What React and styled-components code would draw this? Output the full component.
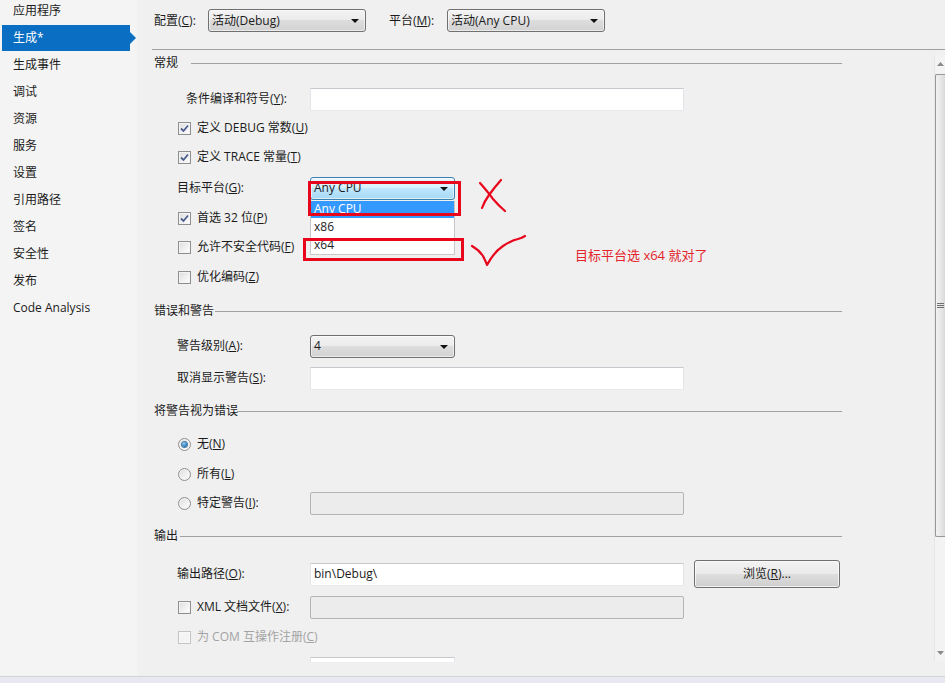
import React from "react";
import styled, { createGlobalStyle } from "styled-components";

const GlobalStyle = createGlobalStyle`
  html, body { margin: 0; padding: 0; }
  body {
    background: #f0f0f0;
    font-family: "Open Sans", "Noto Sans CJK SC", sans-serif;
    font-size: 12px;
    color: #1b1b1b;
    overflow: hidden;
  }
  u { text-decoration-thickness: 1px; text-underline-offset: 1px; }
`;

const Window = styled.div`
  position: relative;
  width: 945px;
  height: 683px;
  display: flex;
  flex-direction: column;
  overflow: hidden;
  line-height: 16px;
`;

const Workspace = styled.div`
  flex: 1;
  display: flex;
  min-height: 0;
`;

const Sidebar = styled.nav`
  width: 137px;
  flex-shrink: 0;
  background: #f4f4f4;
`;

const NavList = styled.ul`
  list-style: none;
  margin: -3px 0 0;
  padding: 0;
  display: flex;
  flex-direction: column;
`;

const NavItem = styled.li`
  position: relative;
  height: 26px;
  margin: 1px 0 0 2px;
  width: 128px;
  padding-left: 11px;
  box-sizing: border-box;
  display: flex;
  align-items: center;
  background: ${(p) => (p.$active ? "#0a6fc2" : "transparent")};
  color: ${(p) => (p.$active ? "#ffffff" : "#1b1b1b")};
  &::after {
    content: "";
    display: ${(p) => (p.$active ? "block" : "none")};
    position: absolute;
    right: -6px;
    top: 7px;
    border-left: 6px solid #0a6fc2;
    border-top: 6px solid transparent;
    border-bottom: 6px solid transparent;
  }
`;

const Main = styled.main`
  flex: 1;
  min-width: 0;
  display: flex;
  flex-direction: column;
  padding-left: 15px;
`;

const TopBar = styled.div`
  height: 41px;
  display: flex;
  align-items: center;
  padding-left: 2px;
`;

const TopLabel = styled.span`
  width: ${(p) => p.$w}px;
  margin-left: ${(p) => p.$ml || 0}px;
  flex-shrink: 0;
  white-space: nowrap;
`;

const Divider = styled.div`
  height: 1px;
  background: #a0a0a0;
  margin-top: 8px;
`;

const Body = styled.div`
  flex: 1;
  display: flex;
  min-height: 0;
  padding-bottom: 14px;
`;

const Form = styled.div`
  flex: 1;
  overflow: hidden;
  padding-left: 2px;
  display: flex;
  flex-direction: column;
`;

const SectionHeader = styled.div`
  width: 688px;
  height: 24px;
  flex-shrink: 0;
  display: flex;
  align-items: center;
  margin-top: ${(p) => p.$mt}px;
`;

const SectionTitle = styled.span`
  width: ${(p) => p.$w}px;
  flex-shrink: 0;
  white-space: nowrap;
`;

const Rule = styled.div`
  flex: 1;
  height: 1px;
  background: #a0a0a0;
`;

const Row = styled.div`
  height: 24px;
  flex-shrink: 0;
  display: flex;
  align-items: ${(p) => (p.$top ? "flex-start" : "center")};
  padding-left: 23px;
  margin-top: ${(p) => p.$mt}px;
`;

const FieldLabel = styled.span`
  width: 133px;
  flex-shrink: 0;
  box-sizing: border-box;
  padding-left: ${(p) => p.$indent || 0}px;
  white-space: nowrap;
`;

const TextBox = styled.div`
  width: ${(p) => p.$w || 374}px;
  height: 23px;
  box-sizing: border-box;
  border: 1px solid;
  border-color: ${(p) =>
    p.$disabled ? "#b4b4b4" : "#c6c9ce #e2e5ea #e6e9ee #e2e5ea"};
  background: ${(p) => (p.$disabled ? "#ececec" : "#ffffff")};
  border-radius: ${(p) => (p.$disabled ? "2px" : "1px")};
  padding-left: 3px;
  display: flex;
  align-items: center;
`;

const Select = styled.div`
  position: relative;
  width: ${(p) => p.$w || 145}px;
  height: 23px;
  flex-shrink: 0;
  box-sizing: border-box;
  border: 1px solid ${(p) => (p.$hot ? "#3c7fb1" : "#707070")};
  border-radius: 3px;
  background: ${(p) =>
    p.$hot
      ? "linear-gradient(#eaf6fd 0%, #d9f0fc 45%, #bee6fd 50%, #a7d9f5 100%)"
      : "linear-gradient(#f3f3f3 0%, #ececec 45%, #dddddd 50%, #d2d2d2 100%)"};
  padding: 0 14px 0 3px;
  display: flex;
  align-items: center;
  box-shadow: inset 0 0 0 1px rgba(255, 255, 255, 0.55);
  &::after {
    content: "";
    position: absolute;
    right: 6px;
    top: 9px;
    border-top: 4px solid #111;
    border-left: 4px solid transparent;
    border-right: 4px solid transparent;
  }
`;

const DropHost = styled.div`
  position: relative;
`;

const DropList = styled.ul`
  position: absolute;
  z-index: 5;
  left: 0;
  top: 24px;
  width: 145px;
  box-sizing: border-box;
  margin: 0;
  padding: 0;
  list-style: none;
  background: #fff;
  border: 1px solid #c8c8c8;
  border-top: none;
`;

const DropItem = styled.li`
  height: 17px;
  padding-left: 3px;
  display: flex;
  align-items: center;
  background: ${(p) => (p.$active ? "#3399ff" : "transparent")};
  color: ${(p) => (p.$active ? "#ffffff" : "#1b1b1b")};
  & + & {
    height: 18px;
  }
`;

const Button = styled.div`
  margin-left: 10px;
  width: 146px;
  height: 28px;
  box-sizing: border-box;
  border: 1px solid #707070;
  border-radius: 3px;
  background: linear-gradient(#f2f2f2 0%, #ebebeb 48%, #dddddd 52%, #cfcfcf 100%);
  box-shadow: inset 0 0 0 1px rgba(255, 255, 255, 0.7);
  display: flex;
  align-items: center;
  justify-content: center;
`;

const CheckGroup = styled.label`
  display: flex;
  align-items: center;
  margin-left: 1px;
  width: 132px;
  white-space: nowrap;
  color: ${(p) => (p.$disabled ? "#a3a3a3" : "inherit")};
`;

const Box = styled.span`
  width: 13px;
  height: 13px;
  box-sizing: border-box;
  flex-shrink: 0;
  margin-right: 6px;
  border: 1px solid ${(p) => (p.$disabled ? "#c4c4c4" : "#8e8f8f")};
  border-radius: ${(p) => (p.$round ? "50%" : "0")};
  background: ${(p) =>
    p.$disabled
      ? "#f4f4f4"
      : "linear-gradient(135deg, #dcdcdc 0%, #f2f2f2 60%, #ffffff 100%)"};
  box-shadow: inset 0 0 0 1px ${(p) => (p.$disabled ? "#f8f8f8" : "#f4f4f4")};
  display: flex;
  align-items: center;
  justify-content: center;
`;

const Dot = styled.span`
  width: 5px;
  height: 5px;
  border-radius: 50%;
  background: radial-gradient(circle at 40% 35%, #a9d6f5 0%, #2a7fc1 55%, #1b4f80 100%);
  box-shadow: 0 0 0 1px #4b7fa8;
`;

const Scrollbar = styled.div`
  width: 11px;
  margin-top: 5px;
  margin-bottom: 1px;
  flex-shrink: 0;
  display: flex;
  flex-direction: column;
  background: #f3f3f3;
  border-left: 1px solid #e6e6e6;
  box-sizing: border-box;
`;

const ScrollArrow = styled.div`
  height: 17px;
  display: flex;
  align-items: center;
  justify-content: center;
`;

const Thumb = styled.div`
  margin-top: 2px;
  height: 463px;
  box-sizing: border-box;
  border: 1px solid #979797;
  border-right: none;
  border-radius: 2px 0 0 2px;
  background: linear-gradient(90deg, #f2f2f2 0%, #e8e8e8 50%, #dadada 100%);
  display: flex;
  align-items: center;
  justify-content: center;
`;

const Grip = styled.div`
  width: 7px;
  height: 5px;
  background: repeating-linear-gradient(#6f6f6f 0 1px, transparent 1px 2px);
`;

const Track = styled.div`
  flex: 1;
`;

const Footer = styled.div`
  height: 6px;
  flex-shrink: 0;
  border-top: 1px solid #d3d3de;
  background: #e8e8f0;
`;

const Annotations = styled.svg`
  position: absolute;
  left: 0;
  top: 0;
  pointer-events: none;
  z-index: 10;
`;

const Note = styled.span`
  position: absolute;
  left: 575px;
  top: 246px;
  font-size: 13px;
  line-height: 18px;
  color: #e3242b;
  z-index: 10;
  white-space: pre;
`;

const CheckMark = () => (
  <svg width="9" height="9" viewBox="0 0 9 9">
    <path d="M1 4.5 L3.5 7 L8 1.5" fill="none" stroke="#4a5d8c" strokeWidth="1.8" />
  </svg>
);

const Check = ({ checked, disabled, children }) => (
  <CheckGroup $disabled={disabled}>
    <Box $disabled={disabled}>{checked && <CheckMark />}</Box>
    {children}
  </CheckGroup>
);

const Radio = ({ checked, children }) => (
  <CheckGroup>
    <Box $round>{checked && <Dot />}</Box>
    {children}
  </CheckGroup>
);

const Section = ({ mt, w, children }) => (
  <SectionHeader $mt={mt}>
    <SectionTitle $w={w}>{children}</SectionTitle>
    <Rule />
  </SectionHeader>
);

const nav = [
  "应用程序",
  "生成*",
  "生成事件",
  "调试",
  "资源",
  "服务",
  "设置",
  "引用路径",
  "签名",
  "安全性",
  "发布",
  "Code Analysis",
];

export default function App() {
  return (
    <>
      <GlobalStyle />
      <Window>
        <Workspace>
          <Sidebar>
            <NavList>
              {nav.map((n, i) => (
                <NavItem key={n} $active={i === 1}>
                  {n}
                </NavItem>
              ))}
            </NavList>
          </Sidebar>
          <Main>
            <TopBar>
              <TopLabel $w={54}>
                配置(<u>C</u>):
              </TopLabel>
              <Select $w={158}>活动(Debug)</Select>
              <TopLabel $w={58} $ml={23}>
                平台(<u>M</u>):
              </TopLabel>
              <Select $w={158}>活动(Any CPU)</Select>
            </TopBar>
            <Divider />
            <Body>
              <Form>
                <Section mt={1} w={37}>常规</Section>
                <Row $mt={12}>
                  <FieldLabel $indent={9}>
                    条件编译和符号(<u>Y</u>):
                  </FieldLabel>
                  <TextBox />
                </Row>
                <Row $mt={5}>
                  <Check checked>
                    定义 DEBUG 常数(<u>U</u>)
                  </Check>
                </Row>
                <Row $mt={5}>
                  <Check checked>
                    定义 TRACE 常量(<u>T</u>)
                  </Check>
                </Row>
                <Row $mt={7}>
                  <FieldLabel>
                    目标平台(<u>G</u>):
                  </FieldLabel>
                  <DropHost>
                    <Select $hot>Any CPU</Select>
                    <DropList>
                      <DropItem $active>Any CPU</DropItem>
                      <DropItem>x86</DropItem>
                      <DropItem>x64</DropItem>
                    </DropList>
                  </DropHost>
                </Row>
                <Row $mt={6}>
                  <Check checked>
                    首选 32 位(<u>P</u>)
                  </Check>
                </Row>
                <Row $mt={5}>
                  <Check>
                    允许不安全代码(<u>F</u>)
                  </Check>
                </Row>
                <Row $mt={6}>
                  <Check>
                    优化编码(<u>Z</u>)
                  </Check>
                </Row>

                <Section mt={10} w={61}>错误和警告</Section>
                <Row $mt={11}>
                  <FieldLabel>
                    警告级别(<u>A</u>):
                  </FieldLabel>
                  <Select>4</Select>
                </Row>
                <Row $mt={8}>
                  <FieldLabel>
                    取消显示警告(<u>S</u>):
                  </FieldLabel>
                  <TextBox />
                </Row>

                <Section mt={9} w={83}>将警告视为错误</Section>
                <Row $mt={9}>
                  <Radio checked>
                    无(<u>N</u>)
                  </Radio>
                </Row>
                <Row $mt={6}>
                  <Radio>
                    所有(<u>L</u>)
                  </Radio>
                </Row>
                <Row $mt={5}>
                  <Radio>
                    特定警告(<u>I</u>):
                  </Radio>
                  <TextBox $disabled />
                </Row>

                <Section mt={9} w={26}>输出</Section>
                <Row $mt={14}>
                  <FieldLabel>
                    输出路径(<u>O</u>):
                  </FieldLabel>
                  <TextBox>bin\Debug\</TextBox>
                  <Button>
                    浏览(<u>R</u>)...
                  </Button>
                </Row>
                <Row $mt={9}>
                  <Check>
                    XML 文档文件(<u>X</u>):
                  </Check>
                  <TextBox $disabled />
                </Row>
                <Row $mt={6}>
                  <Check disabled>
                    为 COM 互操作注册(<u>C</u>)
                  </Check>
                </Row>
                <Row $mt={8} $top>
                  <FieldLabel />
                  <TextBox $w={145} />
                </Row>
              </Form>
              <Scrollbar>
                <ScrollArrow>
                  <svg width="7" height="4" viewBox="0 0 7 4">
                    <path d="M0 4 L3.5 0 L7 4 Z" fill="#8a8a8a" />
                  </svg>
                </ScrollArrow>
                <Thumb>
                  <Grip />
                </Thumb>
                <Track />
                <ScrollArrow>
                  <svg width="7" height="4" viewBox="0 0 7 4">
                    <path d="M0 0 L3.5 4 L7 0 Z" fill="#8a8a8a" />
                  </svg>
                </ScrollArrow>
              </Scrollbar>
            </Body>
          </Main>
        </Workspace>
        <Footer />
        <Annotations width="945" height="683" viewBox="0 0 945 683">
          <g fill="none" stroke="#e8061c" strokeWidth="3">
            <rect x="309.5" y="182.5" width="150" height="32" />
            <rect x="304.5" y="239.5" width="158" height="20" />
          </g>
          <g fill="none" stroke="#e8061c" strokeWidth="2.2" strokeLinecap="round" strokeLinejoin="round">
            <path d="M480 183 Q488 192 493 199 Q499 206 505 211" />
            <path d="M501 180 Q494 188 489 195 Q484 202 482 208" />
            <path d="M472 246 Q479 250 483 256 Q486 262 487 265 Q494 252 503 246 Q512 240 518 239 Q522 238 525 236" />
          </g>
        </Annotations>
        <Note>目标平台选 x64 就对了</Note>
      </Window>
    </>
  );
}
